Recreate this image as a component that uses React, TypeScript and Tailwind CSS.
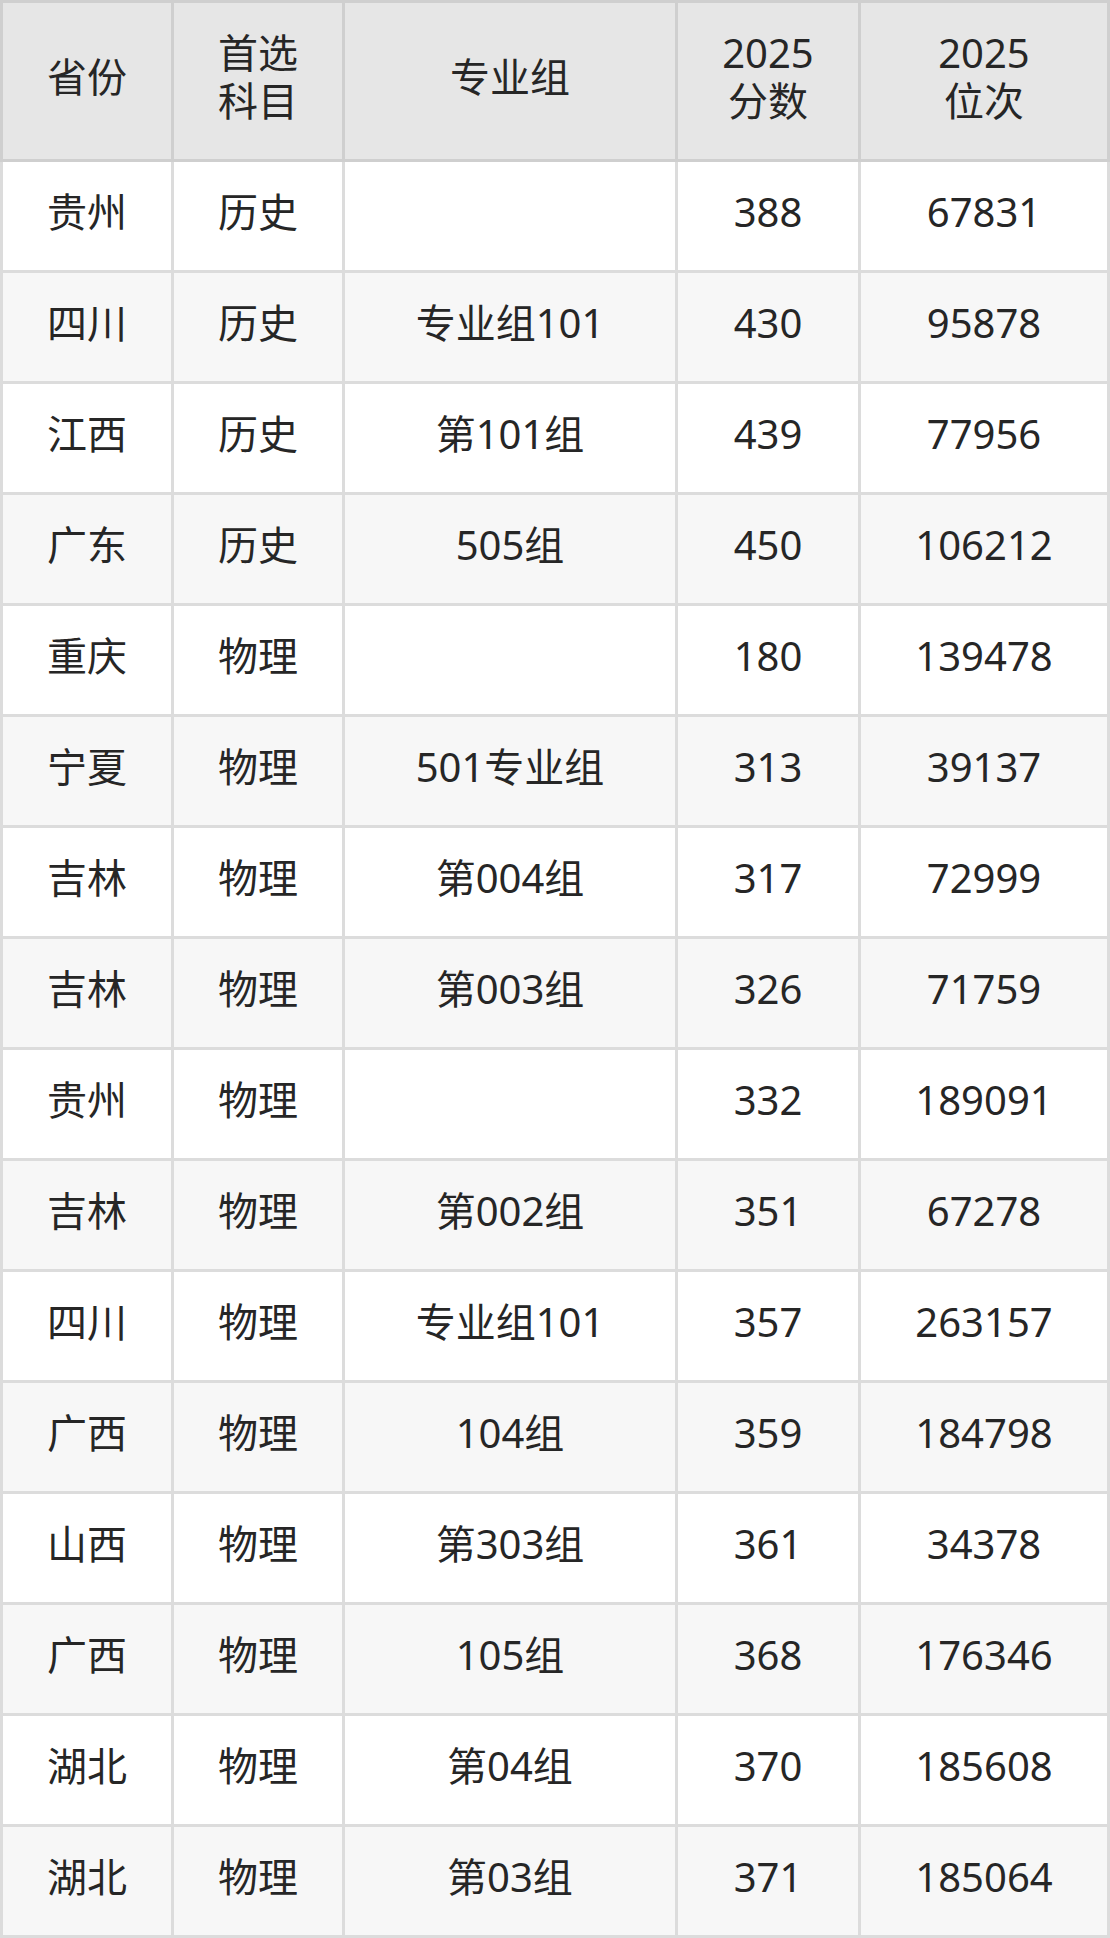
const rows: [string, string, string, string, string][] = [
  ["贵州", "历史", "", "388", "67831"],
  ["四川", "历史", "专业组101", "430", "95878"],
  ["江西", "历史", "第101组", "439", "77956"],
  ["广东", "历史", "505组", "450", "106212"],
  ["重庆", "物理", "", "180", "139478"],
  ["宁夏", "物理", "501专业组", "313", "39137"],
  ["吉林", "物理", "第004组", "317", "72999"],
  ["吉林", "物理", "第003组", "326", "71759"],
  ["贵州", "物理", "", "332", "189091"],
  ["吉林", "物理", "第002组", "351", "67278"],
  ["四川", "物理", "专业组101", "357", "263157"],
  ["广西", "物理", "104组", "359", "184798"],
  ["山西", "物理", "第303组", "361", "34378"],
  ["广西", "物理", "105组", "368", "176346"],
  ["湖北", "物理", "第04组", "370", "185608"],
  ["湖北", "物理", "第03组", "371", "185064"],
];

const cols = "grid grid-cols-[168px_168px_330px_180px_246px] gap-x-[3px] px-[3px]";

export default function App() {
  return (
    <div
      className="w-[1110px] text-[40px] text-[#262626]"
      style={{ fontFamily: '"Noto Sans", "Noto Sans CJK SC", sans-serif' }}
    >
      {/* header */}
      <div className={`${cols} bg-[#cfcfcf] py-[3px]`}>
        {["省份", "首选\n科目", "专业组", "2025\n分数", "2025\n位次"].map((h) => (
          <div
            key={h}
            className="flex h-[156px] items-center justify-center whitespace-pre-line bg-[#e6e6e6] pb-[8px] text-center leading-[48px]"
          >
            {h}
          </div>
        ))}
      </div>

      {/* body */}
      {rows.map((r, i) => (
        <div key={i} className={`${cols} bg-[#dcdcdc] pb-[3px]`}>
          {r.map((c, j) => (
            <div
              key={j}
              className={`flex h-[108px] items-center justify-center pb-[8px] leading-none ${i % 2 ? "bg-[#f7f7f7]" : "bg-white"}`}
            >
              {c}
            </div>
          ))}
        </div>
      ))}
    </div>
  );
}
